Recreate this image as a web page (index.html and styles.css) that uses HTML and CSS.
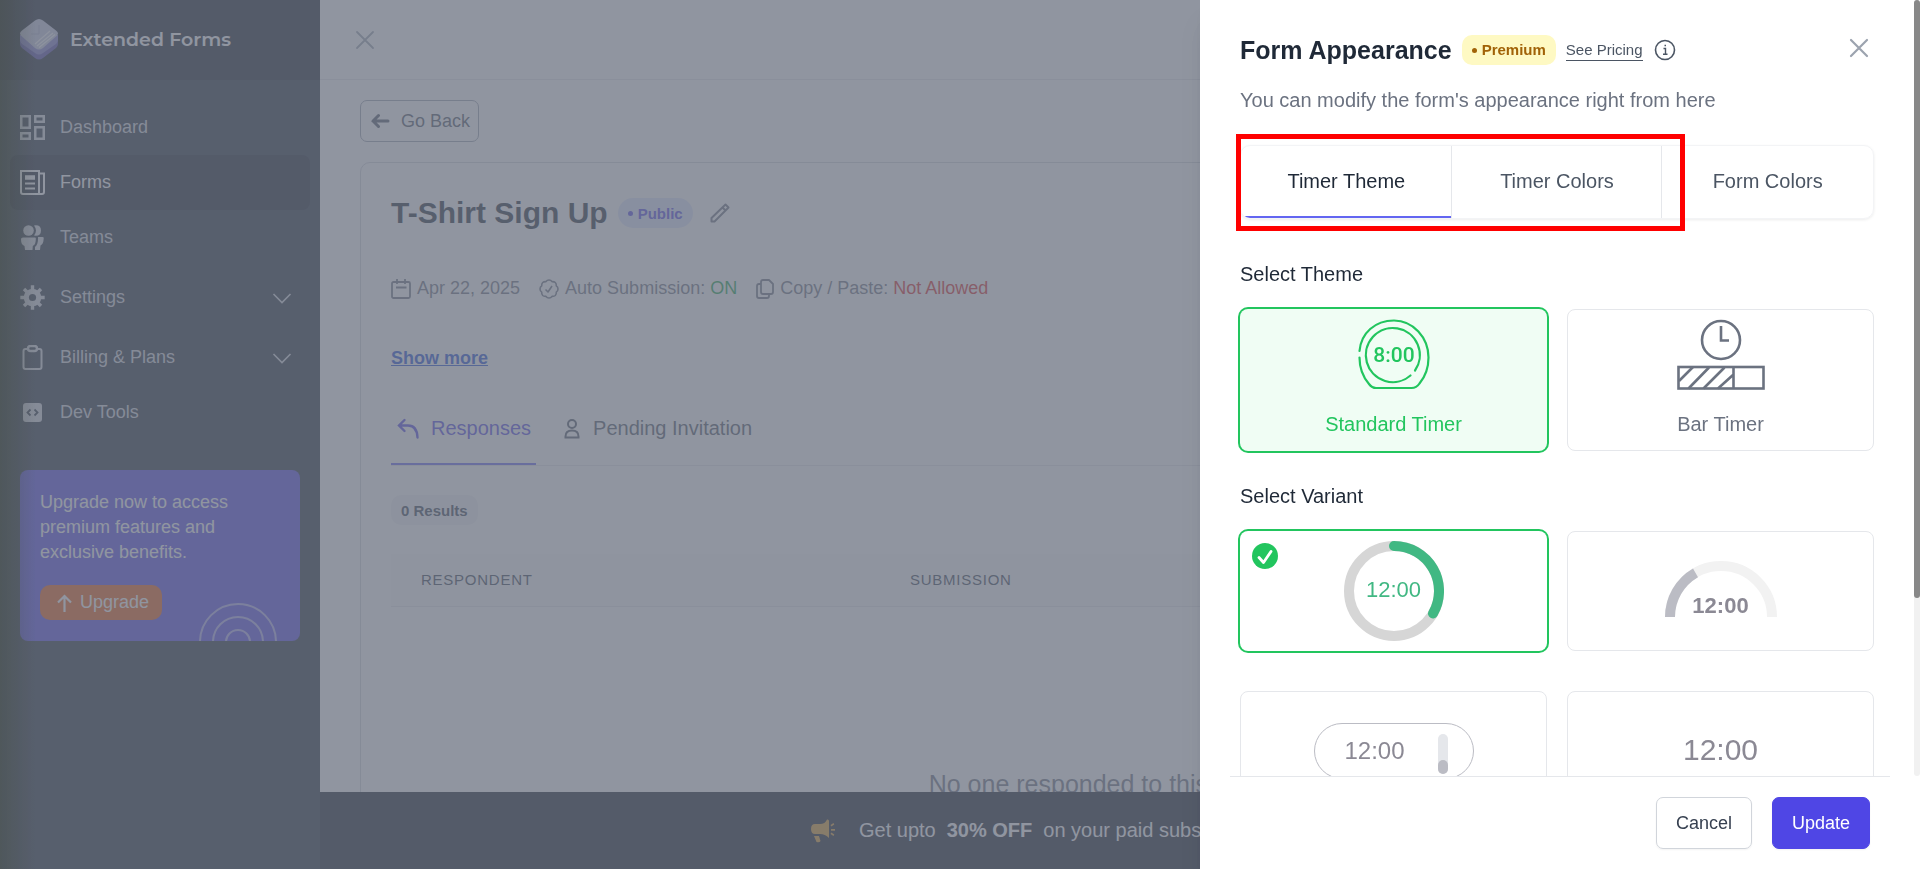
FILE: index.html
```html
<!DOCTYPE html>
<html lang="en">
<head>
<meta charset="utf-8">
<meta name="viewport" content="width=device-width, initial-scale=1">
<title>Extended Forms</title>
<link rel="stylesheet" href="styles.css">
</head>
<body>
<div class="app">
  <aside class="sidebar">
    <div class="brand">
      <svg class="brand-logo" width="40" height="42" viewBox="0 0 40 42" aria-hidden="true">
        <path d="M1 20v6q0 2 2 4l13 10q4 3 8 0l13-10q2-2 2-4v-6z" fill="#4f46a5"/>
        <path d="M1 17v5q0 2 2 4l13 9q4 3 8 0l13-9q2-2 2-4v-5z" fill="#7c78c8"/>
        <path d="M16 2.500q4-3 8 0l13 10q4 3 0 6L24 30q-4 3-8 0L3 18.500q-4-3 0-6z" fill="#c3c6dd"/>
        <path d="M16 26l15-13M18 28l16-13M20 29.500L36 16.500" stroke="#f4f4f8" stroke-width="1.200"/>
        <path d="M20 7v9h-8" stroke="#a6aac6" fill="none"/>
      </svg>
      <span class="brand-name">Extended Forms</span>
    </div>
    <nav class="nav">
      <a class="nav-item" href="#">
        <svg class="icon" viewBox="0 0 25 25" fill="none" stroke="currentColor" stroke-width="2.500"><path d="M1.250 1.250h8.500v11.500h-8.500zM15.250 1.250h8.500v5.500h-8.500zM1.250 18.250h8.500v5.500h-8.500zM15.250 12.250h8.500v11.500h-8.500z"/></svg>
        <span>Dashboard</span></a>
      <a class="nav-item is-active" href="#">
        <svg class="icon" viewBox="0 0 25 25" fill="none" stroke="currentColor" stroke-width="2"><path d="M1 1h18v23H3q-2 0-2-2zM19 3.500h5V22q0 2-2 2h-3M5 13.500h10M5 18.500h10"/><path d="M5 7.500h10" stroke-width="4.500"/></svg>
        <span>Forms</span></a>
      <a class="nav-item" href="#">
        <svg class="icon" viewBox="0 0 25 25" fill="currentColor"><circle cx="8.500" cy="5.500" r="5.300"/><path d="M14 .4q7-1 7 5.100t-7 5.100q4-5 0-10.200zM3 12.500h12q1 0 .8 1.500c-.2 5-1.300 6-3 7L12.500 25h-7.500l-.5-4C2 20 1 18 1 14q0-1.500 2-1.500zM18 12h4.500q1.500 0 1.200 1.500c-.2 4-1.200 6-3.200 7L20 25h-5v-3c2.500-2 3.200-5 3-10z"/></svg>
        <span>Teams</span></a>
      <a class="nav-item is-group" href="#">
        <svg class="icon" viewBox="0 0 25 25"><path d="M12.500.3v24.400M.3 12.500h24.400M4 4l17 17M21 4L4 21" stroke="currentColor" stroke-width="3.400"/><circle cx="12.500" cy="12.500" r="8.800" fill="currentColor"/><circle cx="12.500" cy="12.500" r="3.600" fill="#1f2937"/></svg>
        <span>Settings</span>
        <svg class="chevron" viewBox="0 0 20 20" fill="none" stroke="currentColor" stroke-width="1.600"><path d="M1.500 6l8.500 8.500L18.500 6"/></svg></a>
      <a class="nav-item is-group" href="#">
        <svg class="icon" viewBox="0 0 25 25" fill="none" stroke="currentColor" stroke-width="2"><path d="M8 4H5.500Q3.500 4 3.500 6v16q0 2 2 2h14q2 0 2-2V6q0-2-2-2H17"/><rect x="8" y="1" width="9" height="5" rx="2.500" stroke-width="2.500"/></svg>
        <span>Billing &amp; Plans</span>
        <svg class="chevron" viewBox="0 0 20 20" fill="none" stroke="currentColor" stroke-width="1.600"><path d="M1.500 6l8.500 8.500L18.500 6"/></svg></a>
      <a class="nav-item" href="#">
        <svg class="icon" viewBox="0 0 25 25"><rect x="3" y="3" width="19" height="19" rx="3" fill="currentColor"/><path d="M10.500 9.500l-3 3 3 3M14.500 9.500l3 3-3 3" fill="none" stroke="#1f2937" stroke-width="1.800"/></svg>
        <span>Dev Tools</span></a>
    </nav>
    <section class="upsell">
      <p class="upsell-text">Upgrade now to access premium features and exclusive benefits.</p>
      <button class="upsell-button" type="button">
        <svg width="15" height="18" viewBox="0 0 15 18" fill="none" stroke="currentColor" stroke-width="2.200"><path d="M7.500 18V2M1 8.500L7.500 2 14 8.500"/></svg>
        Upgrade</button>
      <svg class="upsell-rings" width="80" height="38" viewBox="0 0 80 38" fill="none" stroke="#fff" stroke-opacity=".55" stroke-width="2"><circle cx="40" cy="39" r="38"/><circle cx="40" cy="39" r="25"/><circle cx="40" cy="39" r="12"/></svg>
    </section>
  </aside>

  <div class="workspace">
    <header class="topbar">
      <button class="icon-button topbar-close" type="button" aria-label="Close menu">
        <svg width="20" height="20" viewBox="0 0 20 20" fill="none" stroke="currentColor" stroke-width="1.800" stroke-linecap="round"><path d="M2 2l16 16M18 2L2 18"/></svg></button>
    </header>
    <main class="content">
      <button class="back-button" type="button">
        <svg width="19" height="16" viewBox="0 0 19 16" fill="none" stroke="currentColor" stroke-width="3" stroke-linecap="round"><path d="M17 8H2M7.500 2.500L2 8l5.500 5.500"/></svg>
        Go Back</button>
      <article class="form-card">
        <div class="form-title-row">
          <h1 class="form-title">T-Shirt Sign Up</h1>
          <span class="badge badge-public"><i class="dot"></i>Public</span>
          <button class="icon-button edit" type="button" aria-label="Edit form">
            <svg width="20" height="20" viewBox="0 0 20 20" fill="none" stroke="currentColor" stroke-width="2" stroke-linejoin="round"><path d="M1.500 15L15.500 1.500l3 3L4.500 18.500h-3zM12.500 4.500l3 3"/></svg></button>
        </div>
        <ul class="meta">
          <li><svg width="20" height="20" viewBox="0 0 20 20" fill="none" stroke="currentColor" stroke-width="1.800"><rect x="1" y="3" width="18" height="16" rx="1.500"/><path d="M6 0v5M14 0v5M5 8.500h10.500"/></svg>Apr 22, 2025</li>
          <li><svg width="20" height="20" viewBox="0 0 20 20" fill="none" stroke="currentColor" stroke-width="1.600" stroke-linejoin="round"><path d="M10 1q2 0 3 1.600 2.200-.1 3.300.9 1.200 1.200 1 3.400Q19 8 19 10t-1.700 3.100q.2 2.200-1 3.400-1.100 1-3.300.9Q12 19 10 19t-3-1.600q-2.200.1-3.300-.9-1.200-1.200-1-3.400Q1 12 1 10t1.700-3.100q-.2-2.200 1-3.400Q4.800 2.500 7 2.600 8 1 10 1z"/><path d="M6.500 10.500L9 13l4-6"/></svg><span>Auto Submission: <span class="on">ON</span></span></li>
          <li><svg width="18" height="20" viewBox="0 0 18 20" fill="none" stroke="currentColor" stroke-width="1.800" stroke-linejoin="round"><path d="M5 3q0-2 2-2h6l4 4v8q0 2-2 2H7q-2 0-2-2zM5 5H3Q1 5 1 7v10q0 2 2 2h8q2 0 2-2v-2"/></svg><span>Copy / Paste: <span class="off">Not Allowed</span></span></li>
        </ul>
        <a class="show-more" href="#">Show more</a>
        <div class="form-tabs">
          <button class="form-tab is-active" type="button">
            <svg width="25" height="25" viewBox="0 0 25 25" fill="none" stroke="currentColor" stroke-width="2.400" stroke-linecap="round"><path d="M8.500 4L3 9.500 8.500 15M3 9.500h9q9 0 9.500 12"/></svg>Responses</button>
          <button class="form-tab" type="button">
            <svg width="25" height="25" viewBox="0 0 25 25" fill="none" stroke="currentColor" stroke-width="2"><circle cx="14" cy="8" r="4"/><path d="M7.500 21.500v-1q0-6 6.500-6t6.500 6v1z"/></svg>Pending Invitation</button>
        </div>
        <span class="badge badge-count">0 Results</span>
        <table class="responses">
          <thead><tr><th class="col-respondent" scope="col">Respondent</th><th scope="col">Submission</th></tr></thead>
          <tbody><tr><td class="empty" colspan="2">No one responded to this form yet</td></tr></tbody>
        </table>
      </article>
    </main>
    <footer class="promo">
      <svg width="24" height="24" viewBox="0 0 24 24" fill="#d99a2b"><path d="M16 .5q2-.5 2 1.500v17q-4-4-9-4H4q-4 0-4-5t4-5h5q5 0 7-4.500zM3 17h5l1.500 5q-1 2-4 1zM19.500 6l3-2 .8 1.400-3 2zM20 10h4v1.700h-4zM19.500 15l.8-1.400 3 2-.8 1.400z"/></svg>
      <span>Get upto</span><strong>30% OFF</strong><span>on your paid subscription</span>
    </footer>
  </div>
</div>

<div class="overlay"></div>

<section class="panel" role="dialog" aria-labelledby="panel-title">
  <div class="panel-body">
    <header class="panel-head">
      <h2 class="panel-title" id="panel-title">Form Appearance</h2>
      <span class="badge badge-premium"><i class="dot"></i>Premium</span>
      <a class="pricing" href="#">See Pricing</a>
      <svg class="info" width="22" height="22" viewBox="0 0 22 22" fill="none" stroke="#4b5563" stroke-width="1.600" role="img" aria-label="Info"><circle cx="11" cy="11" r="9.500"/><path d="M9.500 9.500h2v5.500M9 15.300h4.500M10.500 6.500h1.500" stroke-width="1.400"/></svg>
      <button class="icon-button panel-close" type="button" aria-label="Close panel">
        <svg width="30" height="30" viewBox="0 0 30 30" fill="none" stroke="currentColor" stroke-width="2.200" stroke-linecap="round"><path d="M7 5l16 16M23 5L7 21"/></svg></button>
    </header>
    <p class="panel-intro">You can modify the form's appearance right from here</p>

    <div class="tabs-wrap">
      <div class="tabs" role="tablist">
        <button class="tab is-active" type="button" role="tab" aria-selected="true">Timer Theme</button>
        <button class="tab" type="button" role="tab">Timer Colors</button>
        <button class="tab" type="button" role="tab">Form Colors</button>
      </div>
      <div class="highlight"></div>
    </div>

    <h3 class="section-title">Select Theme</h3>
    <div class="options">
      <button class="option theme is-selected is-tinted" type="button">
        <svg width="72" height="71" viewBox="0 0 72 71" fill="none" stroke="#22c55e" stroke-width="2.200" stroke-linecap="round">
          <path d="M1.500 32C3 14 17 1.500 36 1.500s34.500 17 34.500 37c0 11-4 20-9 26q-3 4.500-8 4.500H18q-4 0-7-4C5 58 1.500 49 1.500 38.500"/>
          <path d="M52.500 56.500A27 27 0 1 1 57 51.500"/>
          <text class="digits" x="36" y="43" text-anchor="middle" fill="#22c55e" stroke="none">8:00</text>
        </svg>
        <span>Standard Timer</span></button>
      <button class="option theme" type="button">
        <svg width="88" height="71" viewBox="0 0 88 71" fill="none" stroke="#6b7280" stroke-width="2.600">
          <circle cx="44" cy="21" r="19"/><path d="M44 7v14.500h8"/>
          <rect x="1.500" y="48" width="85" height="21.500"/>
          <path d="M56.500 48v21M2 62l14-14M11.500 69.500L32 48.500M26.500 69.500L47.500 48.500M41 69.500l15.500-14"/>
        </svg>
        <span>Bar Timer</span></button>
    </div>

    <h3 class="section-title section-variant">Select Variant</h3>
    <div class="options variants">
      <button class="option variant is-selected" type="button">
        <svg class="check" width="26" height="26" viewBox="0 0 26 26" aria-label="Selected"><circle cx="13" cy="13" r="13" fill="#22c55e"/><path d="M7 14.500l4.500 5L19 8.500" fill="none" stroke="#fff" stroke-width="2.800" stroke-linecap="round" stroke-linejoin="round"/></svg>
        <span class="dial">
          <svg width="100" height="100" viewBox="0 0 100 100" fill="none" stroke-width="10"><circle cx="50" cy="50" r="45" stroke="#d6d6d6"/><path d="M50 5A45 45 0 0 1 89 72.500" stroke="#41b883" stroke-linecap="round"/></svg>
          <span class="time time-green">12:00</span>
        </span></button>
      <button class="option variant" type="button">
        <span class="gauge">
          <svg width="112" height="62" viewBox="0 0 112 62" fill="none" stroke-width="10"><path d="M5 57A51 51 0 0 1 107 57" stroke="#f2f2f2"/><path d="M5 57A51 51 0 0 1 30.500 12.800" stroke="#bbbcc4"/></svg>
          <span class="time time-bold">12:00</span>
        </span></button>
      <button class="option variant" type="button">
        <span class="pill"><span class="time time-pill">12:00</span><span class="meter"><span class="meter-fill"></span></span></span></button>
      <button class="option variant" type="button"><span class="time time-large">12:00</span></button>
    </div>
    <div class="scroll-track"><div class="scroll-thumb"></div></div>
  </div>
  <footer class="panel-foot">
    <button class="button" type="button">Cancel</button>
    <button class="button button-primary" type="button">Update</button>
  </footer>
</section>
</body>
</html>
```
FILE: styles.css
```css
*, *::before, *::after { box-sizing: border-box; }
body, h1, h2, h3, p, ul { margin: 0; padding: 0; }
body {
  font-family: "Liberation Sans", Arial, sans-serif;
  font-size: 18px;
  line-height: 25px;
  color: #1f2937;
  overflow: hidden;
}
button { font: inherit; color: inherit; background: none; border: 0; padding: 0; }
svg { display: block; flex: none; }

.app { display: grid; grid-template-columns: 320px 1fr; height: 100vh; }

/* Sidebar */
.sidebar { background: #1f2937; }
.brand { display: flex; align-items: center; gap: 11px; height: 80px; padding: 0 19px 2px; background: #111827; }
.brand-name { font-family: Montserrat, Inter, sans-serif; font-size: 19px; font-weight: 600; color: #fff; }
.nav { padding: 20px 10px 0; color: #d1d5db; }
.nav-item { display: flex; align-items: center; gap: 15px; height: 55px; padding: 0 10px; border-radius: 8px; color: inherit; text-decoration: none; }
.nav-item.is-active { background: #111827; color: #fff; }
.nav-item.is-group { margin-top: 5px; }
.icon { width: 25px; height: 25px; }
.chevron { width: 20px; height: 20px; margin-left: auto; margin-right: 8px; }
.upsell { position: relative; margin: 30px 20px 0; padding: 20px 20px 21px; border-radius: 8px; background: #4f46e5; color: #fff; overflow: hidden; }
.upsell-text { padding-right: 30px; }
.upsell-button { display: flex; align-items: center; gap: 8px; height: 35px; margin-top: 20px; padding: 0 13px 0 17px; border-radius: 10px; background: #ea580c; }
.upsell-rings { position: absolute; right: 22px; bottom: 0; }

/* Workspace */
.workspace { display: flex; flex-direction: column; min-width: 0; min-height: 0; background: #fff; }
.topbar { display: flex; align-items: center; flex: none; height: 80px; padding: 0 35px; border-bottom: 1px solid #e5e7eb; }
.icon-button { display: flex; color: #9ca3af; }
.content { flex: 1; min-height: 0; padding: 20px 40px 0; overflow: hidden; }
.back-button { display: flex; align-items: center; gap: 11px; height: 42px; padding: 0 8px 0 10px; border: 1px solid #9ca3af; border-radius: 7px; color: #4b5563; }
.form-card { margin-top: 20px; padding: 30px 30px 60px; border: 1px solid #d1d5db; border-radius: 10px; }
.form-title-row { display: flex; align-items: center; gap: 10px; }
.form-title { font-size: 30px; line-height: 40px; }
.badge { display: inline-flex; align-items: center; gap: 5px; height: 30px; padding: 0 10px; font-size: 15px; font-weight: 700; border-radius: 10px; }
.dot { width: 5px; height: 5px; border-radius: 50%; background: currentColor; }
.badge-public { border-radius: 15px; background: #e0e7ff; color: #4f46e5; }
.edit { margin-left: 7px; color: #6b7280; }
.meta { display: flex; gap: 19px; margin-top: 43px; list-style: none; color: #6b7280; }
.meta li { display: flex; align-items: center; gap: 6px; }
.on { color: #16a34a; }
.off { color: #dc2626; }
.show-more { display: block; width: max-content; margin-top: 45px; font-weight: 700; color: #1d4ed8; }
.form-tabs { display: flex; gap: 17px; margin-top: 20px; border-bottom: 1px solid #e5e7eb; font-size: 20px; color: #4b5563; }
.form-tab { display: flex; align-items: center; gap: 10px; height: 74px; padding: 2px 5px 0; border-bottom: 2px solid transparent; }
.form-tab.is-active { border-color: #6366f1; color: #4f46e5; }
.badge-count { margin-top: 29px; background: #f3f4f6; color: #374151; }
.responses { width: 100%; margin-top: 29px; border-collapse: collapse; }
.responses th { height: 52px; padding: 0 30px; border-bottom: 1px solid #e5e7eb; background: #f9fafb; font-size: 15px; font-weight: 400; letter-spacing: 0.05em; text-align: left; text-transform: uppercase; color: #374151; }
.responses .col-respondent { width: 489px; }
.responses .empty { padding: 162px 6px 0 0; font-size: 25px; line-height: 30px; text-align: center; color: #6b7280; }
.promo { display: flex; align-items: center; flex: none; height: 77px; padding-left: 491px; background: #111827; color: #fff; font-size: 20px; white-space: nowrap; overflow: hidden; }
.promo svg { margin-right: 24px; }
.promo strong { margin: 0 11px; }

/* Overlay */
.overlay { position: fixed; inset: 0; background: rgba(107, 114, 128, 0.75); }
.overlay::before { content: ""; position: absolute; inset: 0 auto 0 0; width: 36px; background: linear-gradient(to right, rgba(60, 70, 50, 0.3), rgba(60, 70, 50, 0)); }

/* Slide-over panel */
.panel { position: fixed; inset: 0 0 0 auto; display: flex; flex-direction: column; width: 720px; max-width: 100%; background: #fff; box-shadow: 0 20px 25px -5px rgba(0, 0, 0, 0.1), 0 8px 10px -6px rgba(0, 0, 0, 0.1); }
.panel-body { position: relative; flex: 1; min-height: 0; padding: 30px 46px 0 40px; overflow: hidden; font-size: 20px; line-height: 30px; }
.panel-head { display: flex; align-items: center; gap: 10px; height: 40px; }
.panel-title { font-size: 25px; line-height: 35px; }
.badge-premium { background: #fef9c3; color: #a16207; }
.pricing { font-size: 15px; line-height: 20px; border-bottom: 1px solid #4b5563; color: #4b5563; text-decoration: none; }
.info { margin-left: 1px; }
.panel-close { margin-left: auto; }
.panel-intro { margin-top: 15px; color: #6b7280; }
.tabs-wrap { position: relative; margin-top: 30px; }
.tabs { display: grid; grid-template-columns: repeat(3, 1fr); border: 1px solid #f3f4f6; border-radius: 10px; box-shadow: 0 1px 3px rgba(0, 0, 0, 0.08); overflow: hidden; }
.tab { height: 72px; border-bottom: 2px solid transparent; color: #4b5563; }
.tab + .tab { box-shadow: -1px 0 0 #e5e7eb; }
.tab.is-active { border-color: #6366f1; color: #1f2937; }
.highlight { position: absolute; inset: -11px 189px -12px -4px; border: 5px solid #f00; }
.section-title { margin-top: 40px; font-size: 20px; font-weight: 400; }
.section-variant { margin-top: 30px; }
.options { display: grid; grid-template-columns: repeat(2, 1fr); gap: 40px 20px; margin-top: 20px; }
.option { position: relative; display: flex; flex-direction: column; align-items: center; border: 1px solid #e5e7eb; border-radius: 8px; color: #6b7280; }
.option.is-selected { border-color: transparent; box-shadow: 0 0 0 2px #22c55e; color: #22c55e; }
.is-tinted { background: #f0fdf4; }
.theme { gap: 19px; height: 142px; padding-top: 9px; }
.variant { justify-content: center; height: 120px; color: #8b8994; }
.digits { font-family: Roboto, sans-serif; font-size: 21px; font-weight: 500; }
.check { position: absolute; top: 11px; left: 11px; }
.dial { display: grid; place-items: center; }
.dial > * { grid-area: 1 / 1; }
.time { font-size: 22px; line-height: 24px; }
.time-green { padding-bottom: 2px; color: #41b883; }
.time-bold { padding-bottom: 4px; font-weight: 700; }
.time-pill { font-size: 24px; }
.time-large { padding-bottom: 2px; font-size: 30px; }
.gauge { display: grid; justify-items: center; align-items: end; }
.gauge > * { grid-area: 1 / 1; }
.pill { display: flex; align-items: center; justify-content: space-between; width: 160px; height: 56px; padding: 0 25px 0 30px; border: 1px solid #bbbcc4; border-radius: 28px; }
.meter { display: flex; align-items: flex-end; width: 10px; height: 40px; margin-top: 6px; border-radius: 5px; background: #e5e7eb; }
.meter-fill { width: 10px; height: 14px; border-radius: 5px; background: #bbbcc4; }
.scroll-track { position: absolute; inset: 0 0 0 auto; width: 6px; border-radius: 3px; background: #f1f1f1; }
.scroll-thumb { height: 77%; border-radius: 3px; background: #888; }
.panel-foot { display: flex; justify-content: flex-end; gap: 20px; margin: 0 30px; padding: 20px; border-top: 1px solid #e5e7eb; }
.button { height: 52px; padding: 0 19px; border: 1px solid #d1d5db; border-radius: 7px; box-shadow: 0 1px 2px rgba(0, 0, 0, 0.05); color: #374151; }
.button-primary { border-color: #4f46e5; background: #4f46e5; color: #fff; }
```
